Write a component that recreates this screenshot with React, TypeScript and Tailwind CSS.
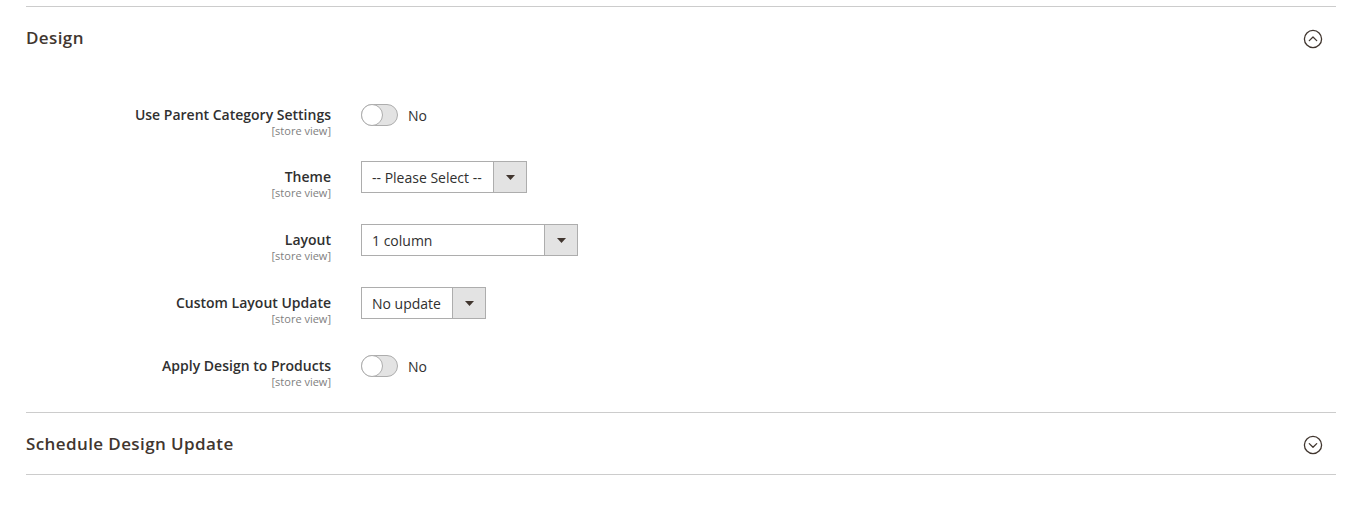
import React from 'react';

const font = { fontFamily: '"Open Sans", "Liberation Sans", sans-serif' };

function CircleChevron({ up }: { up: boolean }) {
  return (
    <svg width="20" height="20" viewBox="0 0 20 20" fill="none">
      <circle cx="10" cy="10" r="8.6" stroke="#41362f" strokeWidth="1.3" />
      {up ? (
        <path d="M6.3 11.6 L10 8 L13.7 11.6" stroke="#41362f" strokeWidth="1.3" strokeLinecap="round" strokeLinejoin="round" />
      ) : (
        <path d="M6.3 8.6 L10 12.2 L13.7 8.6" stroke="#41362f" strokeWidth="1.3" strokeLinecap="round" strokeLinejoin="round" />
      )}
    </svg>
  );
}

function Toggle() {
  return (
    <div className="flex items-center gap-[10px] mt-[5px]">
      <div className="relative w-[37px] h-[22px] rounded-full border border-[#adadad] bg-[#e3e3e3]">
        <div className="absolute left-[-1px] top-[-1px] w-[22px] h-[22px] rounded-full bg-white border border-[#adadad]" />
      </div>
      <span className="text-[14px] text-[#303030]">No</span>
    </div>
  );
}

function Select({ value, width }: { value: string; width: string }) {
  return (
    <div className={`flex h-[32px] border border-[#adadad] bg-white ${width}`}>
      <div className="flex-1 flex items-center pl-[10px] text-[14px] text-[#303030] whitespace-nowrap">{value}</div>
      <div className="w-[33px] border-l border-[#adadad] bg-[#e3e3e3] flex items-center justify-center">
        <svg width="9" height="5" viewBox="0 0 9 5">
          <path d="M0 0 L9 0 L4.5 5 Z" fill="#41362f" />
        </svg>
      </div>
    </div>
  );
}

function Row({ label, children, height }: { label: string; children: React.ReactNode; height: string }) {
  return (
    <div className={`flex ${height}`}>
      <div className="w-[305px] text-right pt-[6px] shrink-0">
        <div className="text-[14px] font-semibold text-[#303030] leading-[20px]">{label}</div>
        <div className="text-[11px] text-[#808080] leading-[12px]">[store view]</div>
      </div>
      <div className="ml-[30px]">{children}</div>
    </div>
  );
}

export default function App() {
  return (
    <div className="bg-white min-h-screen pt-[6px] pl-[26px] pr-[13px]" style={font}>
      <div className="border-t border-[#cccccc]">
        <div className="h-[62px] flex items-center justify-between">
          <h2 className="text-[17px] font-semibold text-[#41362f] tracking-[0.4px]">Design</h2>
          <div className="mr-[13px] mt-[2px]"><CircleChevron up /></div>
        </div>
        <div className="pt-[30px]">
          <Row label="Use Parent Category Settings" height="h-[62px]">
            <Toggle />
          </Row>
          <Row label="Theme" height="h-[63px]">
            <Select value="-- Please Select --" width="w-[166px]" />
          </Row>
          <Row label="Layout" height="h-[63px]">
            <Select value="1 column" width="w-[217px]" />
          </Row>
          <Row label="Custom Layout Update" height="h-[63px]">
            <Select value="No update" width="w-[125px]" />
          </Row>
          <Row label="Apply Design to Products" height="h-[62px]">
            <Toggle />
          </Row>
        </div>
      </div>
      <div className="border-t border-[#cccccc]">
        <div className="h-[61px] flex items-center justify-between">
          <h2 className="text-[17px] font-semibold text-[#41362f] tracking-[0.4px]">Schedule Design Update</h2>
          <div className="mr-[13px] mt-[3px]"><CircleChevron up={false} /></div>
        </div>
      </div>
      <div className="border-t border-[#cccccc]" />
    </div>
  );
}
